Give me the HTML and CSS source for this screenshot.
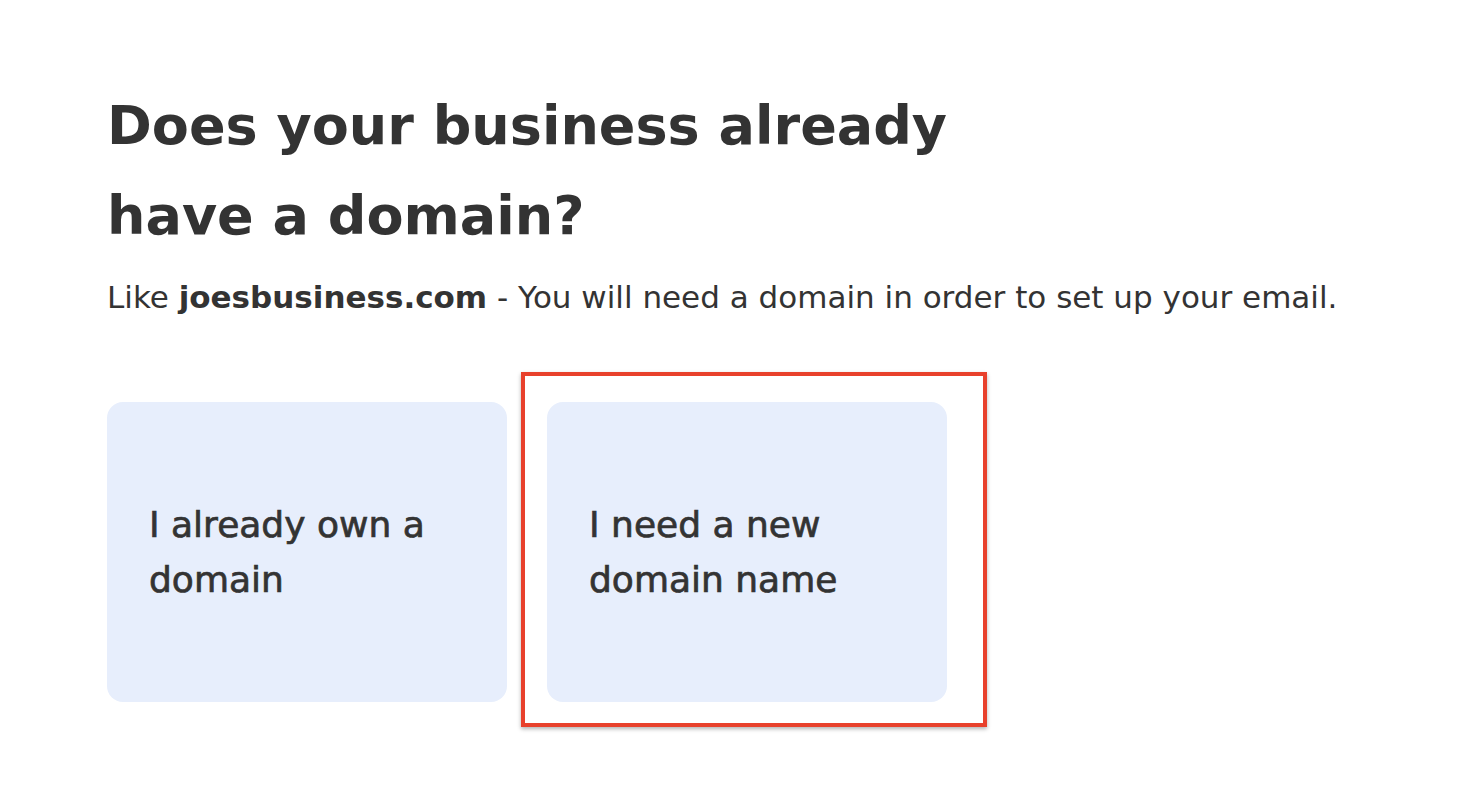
FILE: index.html
```html
<!DOCTYPE html>
<html lang="en">
<head>
<meta charset="utf-8">
<title>Domain</title>
<link rel="stylesheet" href="styles.css">
</head>
<body>
<main class="page">
  <h1 class="title">Does your business already<br>have a domain?</h1>
  <p class="subtitle">Like <strong>joesbusiness.com</strong> - You will need a domain in order to set up your email.</p>
  <div class="options">
    <button class="option" type="button"><span class="option-label">I already own a<br>domain</span></button>
    <div class="option-wrap">
      <button class="option" type="button"><span class="option-label">I need a new<br>domain name</span></button>
      <div class="highlight"></div>
    </div>
  </div>
</main>
</body>
</html>
```

FILE: styles.css
```css
html, body {
  margin: 0;
  padding: 0;
  background: #ffffff;
}

body {
  min-height: 800px;
  font-family: "DejaVu Sans", "Liberation Sans", sans-serif;
  color: #333333;
}

.page {
  padding: 81px 107px 98px;
}

.title {
  margin: 0;
  font-size: 54px;
  line-height: 90px;
  font-weight: 700;
  color: #333333;
}

.subtitle {
  margin: 16px 0 0;
  font-size: 31px;
  line-height: 40px;
  font-weight: 400;
}

.subtitle strong {
  font-weight: 700;
}

.options {
  display: flex;
  gap: 40px;
  margin-top: 85px;
}

.option-wrap {
  position: relative;
}

.option {
  display: flex;
  align-items: center;
  width: 400px;
  height: 300px;
  padding: 0 42px;
  box-sizing: border-box;
  border: none;
  border-radius: 16px;
  background: #e7eefc;
  font-family: inherit;
  text-align: left;
  color: #333333;
  cursor: pointer;
}

.option-label {
  font-size: 36px;
  line-height: 55px;
  font-weight: 400;
  -webkit-text-stroke: 0.7px #333333;
}

.highlight {
  position: absolute;
  left: -26px;
  top: -30px;
  width: 466px;
  height: 355px;
  box-sizing: border-box;
  border: 4px solid #e8412c;
  box-shadow: 0 2px 4px rgba(0, 0, 0, 0.3);
  pointer-events: none;
}
```
